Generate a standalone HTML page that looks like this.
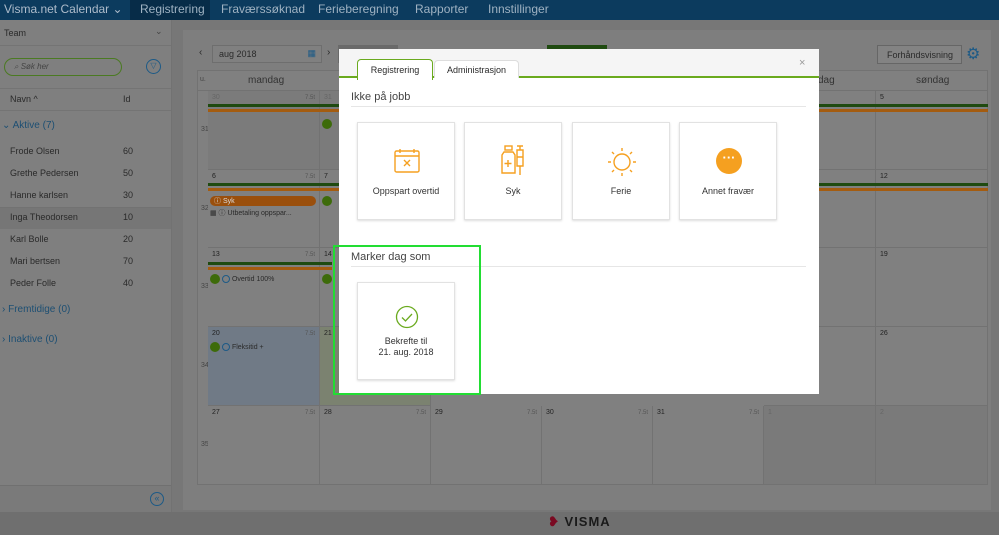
<!DOCTYPE html>
<html><head><meta charset="utf-8"><style>
*{box-sizing:border-box;margin:0;padding:0}
body{width:999px;height:535px;overflow:hidden;background:#777;font-family:"Liberation Sans",sans-serif;font-size:9px;color:#2a2a2a;position:relative}
.a{position:absolute}
.nav{left:0;top:0;width:999px;height:20px;background:#0c3b5e}
.nav span{position:absolute;top:2px;font-size:12px;color:#9fb2c2}
.sb{left:0;top:20px;width:172px;height:492px;background:#7f7f7f;border-right:1px solid #727272}
.row{position:absolute;left:10px;font-size:9px;color:#2a2a2a}
.cal{left:183px;top:30px;width:808px;height:480px;background:#7e7e7e}
.cell{position:absolute;border-right:1px solid #727272;border-bottom:1px solid #727272;background:#808080}
.n{position:absolute;left:4px;top:3px;font-size:7px;color:#222}
.h{position:absolute;right:4px;top:4px;font-size:6px;color:#555}
.gl{position:absolute;height:3px;background:#1f4a10}
.ol{position:absolute;height:3px;background:#a45c10}
.dot{display:inline-block;width:10px;height:10px;border-radius:50%;background:#3d6b0a;vertical-align:middle}
.ii{display:inline-block;width:8px;height:8px;border-radius:50%;border:1px solid #1d5a86;vertical-align:middle;margin-left:2px}
.modal{left:339px;top:49px;width:480px;height:345px;background:#fff}
.card{position:absolute;width:98px;height:98px;border:1px solid #e2e2e2;box-shadow:0 1px 2px #ddd;background:#fff;text-align:center;font-size:9px;color:#333}
.card .t{position:absolute;left:0;right:0;top:63px}
</style></head><body>
<div class="a nav">
<span style="left:4px;color:#aebccb">Visma.net Calendar ⌄</span>
<div class="a" style="left:130px;top:0;width:80px;height:20px;background:#072c48"></div>
<span style="left:140px">Registrering</span>
<span style="left:221px">Fraværssøknad</span>
<span style="left:318px">Ferieberegning</span>
<span style="left:415px">Rapporter</span>
<span style="left:488px">Innstillinger</span>
</div>
<div class="a sb">
<div class="row" style="left:4px;top:8px">Team</div><div class="row" style="left:155px;top:6px;color:#444">⌄</div>
<div class="a" style="left:0;top:25px;width:171px;height:1px;background:#747474"></div>
<div class="a" style="left:4px;top:38px;width:118px;height:18px;border:1px solid #4b7a22;border-radius:9px;font-size:8px;color:#444;font-style:italic;padding:3px 0 0 9px">⌕ Søk her</div>
<div class="a" style="left:146px;top:39px;width:15px;height:15px;border:1.5px solid #1d5a86;border-radius:50%;color:#1d5a86;font-size:8px;text-align:center;line-height:12px">▽</div>
<div class="a" style="left:0;top:68px;width:171px;height:1px;background:#747474"></div>
<div class="row" style="top:74px">Navn ^</div><div class="row" style="left:123px;top:74px">Id</div>
<div class="a" style="left:0;top:90px;width:171px;height:1px;background:#747474"></div>
<div class="row" style="left:2px;top:100px;font-size:10px;color:#1d4f73">⌄ Aktive (7)</div>
<div class="a" style="left:0;top:187px;width:171px;height:22px;background:#767676;border-top:1px solid #727272"></div>
<div class="row" style="top:126px">Frode Olsen</div><div class="row" style="left:123px;top:126px">60</div>
<div class="row" style="top:148px">Grethe Pedersen</div><div class="row" style="left:123px;top:148px">50</div>
<div class="row" style="top:170px">Hanne karlsen</div><div class="row" style="left:123px;top:170px">30</div>
<div class="row" style="top:192px">Inga Theodorsen</div><div class="row" style="left:123px;top:192px">10</div>
<div class="row" style="top:214px">Karl Bolle</div><div class="row" style="left:123px;top:214px">20</div>
<div class="row" style="top:236px">Mari bertsen</div><div class="row" style="left:123px;top:236px">70</div>
<div class="row" style="top:258px">Peder Folle</div><div class="row" style="left:123px;top:258px">40</div>
<div class="row" style="left:2px;top:284px;font-size:10px;color:#1d4f73">› Fremtidige (0)</div>
<div class="row" style="left:2px;top:314px;font-size:10px;color:#1d4f73">› Inaktive (0)</div>
<div class="a" style="left:0;top:465px;width:171px;height:27px;background:#7a7a7a;border-top:1px solid #707070"></div>
<div class="a" style="left:150px;top:472px;width:14px;height:14px;border:1.5px solid #1d5a86;border-radius:50%;color:#1d5a86;font-size:9px;text-align:center;line-height:10px">«</div>
</div>
<div class="a cal"></div>
<div class="a" style="left:199px;top:47px;font-size:10px">‹</div>
<div class="a" style="left:212px;top:45px;width:110px;height:18px;border:1px solid #6e6e6e;background:#808080;font-size:9px;padding:3px 6px">aug 2018<span style="position:absolute;right:5px;top:2px;color:#1d5a86">▦</span></div>
<div class="a" style="left:327px;top:47px;font-size:10px">›</div>
<div class="a" style="left:338px;top:45px;width:60px;height:18px;background:#6a6a6a"></div>
<div class="a" style="left:547px;top:45px;width:60px;height:4px;background:#1f4a10"></div>
<div class="a" style="left:877px;top:45px;width:85px;height:19px;border:1px solid #666;background:#838383;font-size:9px;padding:4px 0 0 9px">Forhåndsvisning</div>
<div class="a" style="left:966px;top:44px;font-size:16px;color:#1d5a86">⚙</div>
<div class="a" style="left:197px;top:70px;width:791px;height:415px;border:1px solid #727272;background:#808080"></div>
<div class="a" style="left:200px;top:76px;font-size:7px;color:#444">u.</div>
<div class="a" style="left:248px;top:75px;font-size:10px;color:#333">mandag</div>
<div class="a" style="left:818px;top:75px;font-size:10px;color:#333">dag</div>
<div class="a" style="left:916px;top:75px;font-size:10px;color:#333">søndag</div>
<div class="a" style="left:197px;top:90px;width:791px;height:1px;background:#727272"></div>
<div class="a" style="left:201px;top:126px;font-size:7px;color:#444">31</div>
<div class="a" style="left:201px;top:205px;font-size:7px;color:#444">32</div>
<div class="a" style="left:201px;top:283px;font-size:7px;color:#444">33</div>
<div class="a" style="left:201px;top:362px;font-size:7px;color:#444">34</div>
<div class="a" style="left:201px;top:441px;font-size:7px;color:#444">35</div>
<!-- cells -->
<div class="cell" style="left:208px;top:91px;width:112px;height:79px;background:#7b7b7b"><span class="n" style="color:#666">30</span><span class="h">7.5t</span></div>
<div class="cell" style="left:320px;top:91px;width:111px;height:79px;background:#7b7b7b"><span class="n" style="color:#666">31</span><span class="dot" style="position:absolute;left:2px;top:28px"></span></div>
<div class="cell" style="left:764px;top:91px;width:112px;height:79px"></div>
<div class="cell" style="left:876px;top:91px;width:112px;height:79px"><span class="n">5</span></div>
<div class="gl" style="left:208px;top:104px;width:780px"></div><div class="ol" style="left:208px;top:109px;width:780px"></div>
<div class="cell" style="left:208px;top:170px;width:112px;height:78px"><span class="n">6</span><span class="h">7.5t</span>
<div style="position:absolute;left:2px;top:26px;width:106px;height:10px;border-radius:5px;background:#9a4f0c;font-size:7px;color:#ddd;padding-left:4px">ⓘ Syk</div>
<div style="position:absolute;left:2px;top:38px;font-size:7px">▦ ⓘ Utbetaling oppspar...</div></div>
<div class="cell" style="left:320px;top:170px;width:111px;height:78px"><span class="n">7</span><span class="dot" style="position:absolute;left:2px;top:26px"></span></div>
<div class="cell" style="left:764px;top:170px;width:112px;height:78px"></div>
<div class="cell" style="left:876px;top:170px;width:112px;height:78px"><span class="n">12</span></div>
<div class="gl" style="left:208px;top:183px;width:780px"></div><div class="ol" style="left:208px;top:188px;width:780px"></div>
<div class="cell" style="left:208px;top:248px;width:112px;height:79px"><span class="n">13</span><span class="h">7.5t</span><div style="position:absolute;left:2px;top:26px;font-size:7px"><span class="dot"></span><span class="ii"></span> Overtid 100%</div></div>
<div class="cell" style="left:320px;top:248px;width:111px;height:79px"><span class="n">14</span><span class="dot" style="position:absolute;left:2px;top:26px"></span></div>
<div class="cell" style="left:764px;top:248px;width:112px;height:79px"></div>
<div class="cell" style="left:876px;top:248px;width:112px;height:79px"><span class="n">19</span></div>
<div class="gl" style="left:208px;top:262px;width:124px"></div><div class="ol" style="left:208px;top:267px;width:124px"></div>
<div class="cell" style="left:208px;top:327px;width:112px;height:79px;background:#707a86"><span class="n">20</span><span class="h">7.5t</span><div style="position:absolute;left:2px;top:15px;font-size:7px"><span class="dot"></span><span class="ii"></span> Fleksitid +</div></div>
<div class="cell" style="left:320px;top:327px;width:111px;height:79px;background:#7b8270"><span class="n">21</span></div>
<div class="cell" style="left:764px;top:327px;width:112px;height:79px"></div>
<div class="cell" style="left:876px;top:327px;width:112px;height:79px"><span class="n">26</span></div>
<div class="cell" style="left:208px;top:406px;width:112px;height:79px"><span class="n">27</span><span class="h">7.5t</span></div>
<div class="cell" style="left:320px;top:406px;width:111px;height:79px"><span class="n">28</span><span class="h">7.5t</span></div>
<div class="cell" style="left:431px;top:406px;width:111px;height:79px"><span class="n">29</span><span class="h">7.5t</span></div>
<div class="cell" style="left:542px;top:406px;width:111px;height:79px"><span class="n">30</span><span class="h">7.5t</span></div>
<div class="cell" style="left:653px;top:406px;width:111px;height:79px"><span class="n">31</span><span class="h">7.5t</span></div>
<div class="cell" style="left:764px;top:406px;width:112px;height:79px;background:#7a7a7a"><span class="n" style="color:#666">1</span></div>
<div class="cell" style="left:876px;top:406px;width:112px;height:79px;background:#7a7a7a"><span class="n" style="color:#666">2</span></div>
<!-- footer -->
<div class="a" style="left:0;top:512px;width:999px;height:23px;background:#6f6f6f"></div>
<div class="a" style="left:548px;top:514px;font-size:13px;font-weight:bold;color:#1a1a1a;letter-spacing:1px"><span style="color:#7a0a22">❥</span> VISMA</div>
<!-- modal -->
<div class="a modal">
<div class="a" style="left:0;top:0;width:480px;height:29px;background:#f5f5f5;border-bottom:2px solid #6aaa1e"></div>
<div class="a" style="left:18px;top:10px;width:76px;height:21px;background:#fff;border:1.5px solid #6aaa1e;border-bottom:none;border-radius:4px 4px 0 0;font-size:9px;text-align:center;padding-top:5px">Registrering</div>
<div class="a" style="left:95px;top:11px;width:85px;height:18px;background:#fff;border:1px solid #ddd;border-bottom:none;border-radius:4px 4px 0 0;font-size:9px;text-align:center;padding-top:4px">Administrasjon</div>
<div class="a" style="left:460px;top:8px;font-size:11px;color:#999">×</div>
<div class="a" style="left:12px;top:42px;font-size:11px;color:#444">Ikke på jobb</div>
<div class="a" style="left:12px;top:57px;width:455px;height:1px;background:#e6e6e6"></div>
<div class="card" style="left:18px;top:73px"><svg class="a" style="left:36px;top:25px" width="26" height="26" viewBox="0 0 26 26" fill="none" stroke="#f5a020" stroke-width="1.4"><rect x="1" y="3" width="24" height="21" rx="1.5"/><line x1="1" y1="8" x2="25" y2="8"/><line x1="6" y1="1" x2="6" y2="5"/><line x1="20" y1="1" x2="20" y2="5"/><path d="M10 12l6 6M16 12l-6 6"/></svg><div class="t">Oppspart overtid</div></div>
<div class="card" style="left:125px;top:73px"><svg class="a" style="left:36px;top:22px" width="26" height="32" viewBox="0 0 26 32" fill="none" stroke="#f5a020" stroke-width="1.4"><rect x="4" y="1" width="7" height="4"/><path d="M3 7h9l2 3v18H1V10z"/><path d="M7 15v7M3.5 18.5h7"/><path d="M19 1v4M16 1h6M16 5h6v16h-6z M16 12h6 M19 21v9"/></svg><div class="t">Syk</div></div>
<div class="card" style="left:233px;top:73px"><svg class="a" style="left:34px;top:24px" width="30" height="30" viewBox="0 0 30 30" fill="none" stroke="#f5a020" stroke-width="1.4"><circle cx="15" cy="15" r="8"/><path d="M15 1v3M15 26v3M1 15h3M26 15h3M5 5l2 2M23 23l2 2M5 25l2-2M23 7l2-2"/></svg><div class="t">Ferie</div></div>
<div class="card" style="left:340px;top:73px"><div class="a" style="left:36px;top:25px;width:26px;height:26px;border-radius:50%;background:#f5a020;color:#fff;font-size:13px;line-height:20px;font-weight:bold">···</div><div class="t">Annet fravær</div></div>
<div class="a" style="left:12px;top:202px;font-size:11px;color:#444">Marker dag som</div>
<div class="a" style="left:12px;top:217px;width:455px;height:1px;background:#e6e6e6"></div>
<div class="card" style="left:18px;top:233px"><svg class="a" style="left:37px;top:22px" width="24" height="24" viewBox="0 0 24 24" fill="none" stroke="#6aaa1e" stroke-width="1.3"><circle cx="12" cy="12" r="10.5"/><path d="M7 12.5l3.5 3.5L17 9"/></svg><div class="t" style="top:53px;line-height:11px">Bekrefte til<br>21. aug. 2018</div></div>
</div>
<div class="a" style="left:333px;top:245px;width:148px;height:150px;border:2px solid #22dd33"></div>
</body></html>
